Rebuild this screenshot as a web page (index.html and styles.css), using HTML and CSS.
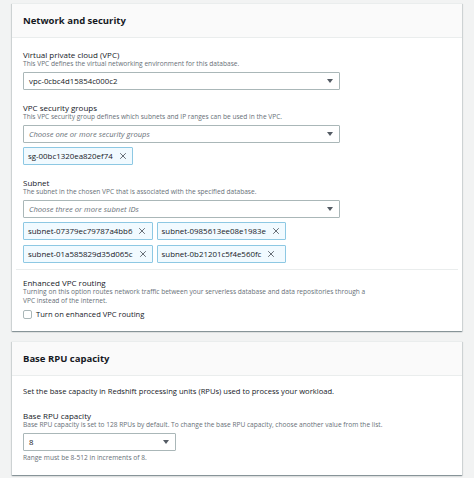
FILE: index.html
```
<!DOCTYPE html>
<html>
<head>
<meta charset="utf-8">
<link rel="stylesheet" href="styles.css">
</head>
<body>
<div class="page">
  <section class="card">
    <header class="card-header"><h2>Network and security</h2></header>
    <div class="card-body">
      <div class="field">
        <div class="label">Virtual private cloud (VPC)</div>
        <div class="desc">This VPC defines the virtual networking environment for this database.</div>
        <div class="select wide"><span class="value">vpc-0cbc4d15854c000c2</span><span class="caret"></span></div>
      </div>
      <div class="field">
        <div class="label">VPC security groups</div>
        <div class="desc">This VPC security group defines which subnets and IP ranges can be used in the VPC.</div>
        <div class="select wide"><span class="placeholder">Choose one or more security groups</span><span class="caret"></span></div>
        <div class="tokens">
          <div class="token"><span>sg-00bc1320ea820ef74</span><svg class="x" viewBox="0 0 10 10"><path d="M1.5 1.5L8.5 8.5M8.5 1.5L1.5 8.5"/></svg></div>
        </div>
      </div>
      <div class="field">
        <div class="label">Subnet</div>
        <div class="desc">The subnet in the chosen VPC that is associated with the specified database.</div>
        <div class="select wide"><span class="placeholder">Choose three or more subnet IDs</span><span class="caret"></span></div>
        <div class="tokens">
          <div class="token"><span>subnet-07379ec79787a4bb6</span><svg class="x" viewBox="0 0 10 10"><path d="M1.5 1.5L8.5 8.5M8.5 1.5L1.5 8.5"/></svg></div>
          <div class="token"><span>subnet-0985613ee08e1983e</span><svg class="x" viewBox="0 0 10 10"><path d="M1.5 1.5L8.5 8.5M8.5 1.5L1.5 8.5"/></svg></div>
          <div class="token"><span>subnet-01a585829d35d065c</span><svg class="x" viewBox="0 0 10 10"><path d="M1.5 1.5L8.5 8.5M8.5 1.5L1.5 8.5"/></svg></div>
          <div class="token"><span>subnet-0b21201c5f4e560fc</span><svg class="x" viewBox="0 0 10 10"><path d="M1.5 1.5L8.5 8.5M8.5 1.5L1.5 8.5"/></svg></div>
        </div>
      </div>
      <hr class="divider">
      <div class="field">
        <div class="label">Enhanced VPC routing</div>
        <div class="desc">Turning on this option routes network traffic between your serverless database and data repositories through a<br>VPC instead of the internet.</div>
        <label class="check"><span class="box"></span><span>Turn on enhanced VPC routing</span></label>
      </div>
    </div>
  </section>

  <section class="card">
    <header class="card-header"><h2>Base RPU capacity</h2></header>
    <div class="card-body body2">
      <p class="intro">Set the base capacity in Redshift processing units (RPUs) used to process your workload.</p>
      <div class="field">
        <div class="label">Base RPU capacity</div>
        <div class="desc">Base RPU capacity is set to 128 RPUs by default. To change the base RPU capacity, choose another value from the list.</div>
        <div class="select narrow"><span class="value">8</span><span class="caret"></span></div>
        <div class="hint">Range must be 8-512 in increments of 8.</div>
      </div>
    </div>
  </section>
</div>
</body>
</html>
```

FILE: styles.css
```
* { box-sizing: border-box; }
html, body { margin: 0; padding: 0; }
body {
  background: #f2f3f3;
  font-family: "Open Sans", "Noto Sans", sans-serif;
  color: #16191f;
  width: 474px;
  height: 478px;
  overflow: hidden;
}
.page {
  padding: 3px 12px 0 12px;
  display: flex;
  flex-direction: column;
  gap: 10px;
}
.card {
  background: #fff;
  box-shadow: 0 1px 1px rgba(0, 28, 36, 0.3), 1px 1px 1px rgba(0, 28, 36, 0.1), -1px 1px 1px rgba(0, 28, 36, 0.1);
  border-top: 1px solid #eaeded;
}
.card-header {
  background: #fafafa;
  border-bottom: 1px solid #eaeded;
  height: 34px;
  display: flex;
  align-items: center;
  padding-left: 11px;
}
.card-header h2 {
  margin: 0;
  font-size: 9.5px;
  font-weight: 700;
  line-height: 14px;
}
.card-body {
  padding: 12px 11px 11px 11px;
  display: flex;
  flex-direction: column;
}
.field {
  display: flex;
  flex-direction: column;
  margin-bottom: 13px;
}
.field:last-child { margin-bottom: 0; }
.label {
  font-size: 8px;
  font-weight: 500;
  line-height: 9px;
  color: #16191f;
}
.desc {
  font-size: 6.6px;
  line-height: 9px;
  color: #687078;
}
.select {
  margin-top: 4px;
  height: 18px;
  border: 1px solid #aab7b8;
  border-radius: 1px;
  display: flex;
  align-items: center;
  justify-content: space-between;
  padding: 0 6px 0 5px;
  font-size: 7.8px;
}
.select.wide { width: 317px; }
.select.narrow { width: 153px; }
.placeholder { font-style: italic; color: #687078; font-size: 7.6px; }
.value { color: #16191f; }
.caret {
  width: 0;
  height: 0;
  border-left: 3px solid transparent;
  border-right: 3px solid transparent;
  border-top: 4px solid #545b64;
}
.tokens {
  margin-top: 4px;
  display: grid;
  grid-template-columns: max-content max-content;
  column-gap: 4px;
  row-gap: 5px;
  justify-content: start;
}
.token {
  height: 18px;
  background: #f1faff;
  border: 1px solid #8dc8e3;
  border-radius: 1px;
  display: flex;
  align-items: center;
  padding: 0 5px 0 4px;
  font-size: 7.9px;
  color: #16191f;
}
.token .x {
  width: 8px;
  height: 8px;
  margin-left: 6px;
  fill: none;
  stroke: #545b64;
  stroke-width: 1.1;
}
.divider {
  border: 0;
  border-top: 1px solid #eaeded;
  margin: -7px -7px 8px -7px;
}
.check {
  margin-top: 3px;
  display: flex;
  align-items: center;
  gap: 4px;
  font-size: 7.6px;
  line-height: 12px;
}
.check .box {
  width: 9px;
  height: 9px;
  border: 1px solid #aab7b8;
  border-radius: 2px;
  background: #fff;
}
.body2 { padding-top: 10px; padding-bottom: 13px; }
.intro {
  margin: 0 0 14px 0;
  font-size: 7.6px;
  font-weight: 500;
  line-height: 11px;
}
.hint {
  margin-top: 2px;
  font-size: 6.6px;
  line-height: 9px;
  color: #687078;
}
```
